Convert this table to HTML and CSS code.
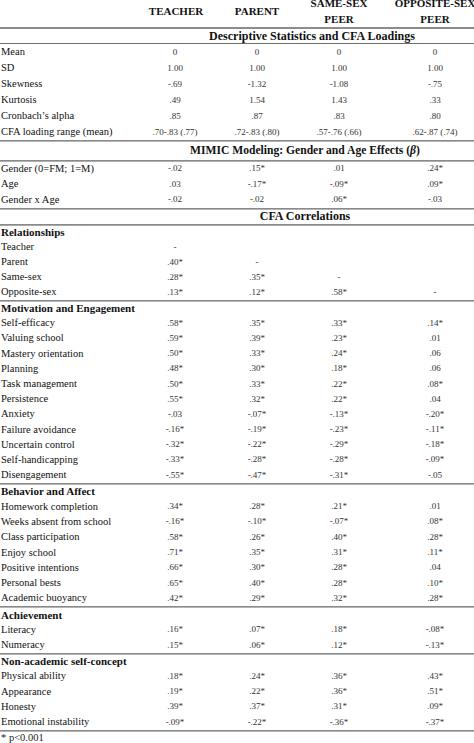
FILE: index.html
```html
<!DOCTYPE html>
<html>
<head>
<meta charset="utf-8">
<link rel="stylesheet" href="styles.css">
</head>
<body>
<div class="sheet">
  <div class="head">
    <div></div>
    <div class="hc single teach">TEACHER</div>
    <div class="hc single">PARENT</div>
    <div class="hc double">SAME-SEX<br>PEER</div>
    <div class="hc double opp">OPPOSITE-SEX<br>PEER</div>
  </div>

  <div class="banner b1"><div></div><div class="bt bt1">Descriptive Statistics and CFA Loadings</div></div>
  <div class="sec desc">
    <div class="row"><div class="lab">Mean</div><div class="v">0</div><div class="v">0</div><div class="v">0</div><div class="v">0</div></div>
    <div class="row"><div class="lab">SD</div><div class="v">1.00</div><div class="v">1.00</div><div class="v">1.00</div><div class="v">1.00</div></div>
    <div class="row"><div class="lab">Skewness</div><div class="v">-.69</div><div class="v">-1.32</div><div class="v">-1.08</div><div class="v">-.75</div></div>
    <div class="row"><div class="lab">Kurtosis</div><div class="v">.49</div><div class="v">1.54</div><div class="v">1.43</div><div class="v">.33</div></div>
    <div class="row"><div class="lab">Cronbach’s alpha</div><div class="v">.85</div><div class="v">.87</div><div class="v">.83</div><div class="v">.80</div></div>
    <div class="row"><div class="lab">CFA loading range (mean)</div><div class="v">.70-.83 (.77)</div><div class="v">.72-.83 (.80)</div><div class="v">.57-.76 (.66)</div><div class="v">.62-.87 (.74)</div></div>
  </div>

  <div class="banner b2"><div></div><div class="bt bt2">MIMIC Modeling: Gender and Age Effects (<i>β</i>)</div></div>
  <div class="sec mimic">
    <div class="row"><div class="lab">Gender (0=FM; 1=M)</div><div class="v">-.02</div><div class="v">.15*</div><div class="v">.01</div><div class="v">.24*</div></div>
    <div class="row"><div class="lab">Age</div><div class="v">.03</div><div class="v">-.17*</div><div class="v">-.09*</div><div class="v">.09*</div></div>
    <div class="row"><div class="lab">Gender x Age</div><div class="v">-.02</div><div class="v">-.02</div><div class="v">.06*</div><div class="v">-.03</div></div>
  </div>

  <div class="banner b3"><div></div><div class="bt bt3">CFA Correlations</div></div>

  <div class="sec rel">
    <div class="row"><div class="lab bold">Relationships</div></div>
    <div class="row"><div class="lab">Teacher</div><div class="v">-</div></div>
    <div class="row"><div class="lab">Parent</div><div class="v">.40*</div><div class="v">-</div></div>
    <div class="row"><div class="lab">Same-sex</div><div class="v">.28*</div><div class="v">.35*</div><div class="v">-</div></div>
    <div class="row"><div class="lab">Opposite-sex</div><div class="v">.13*</div><div class="v">.12*</div><div class="v">.58*</div><div class="v">-</div></div>
  </div>

  <div class="sec mot">
    <div class="row"><div class="lab bold">Motivation and Engagement</div></div>
    <div class="row"><div class="lab">Self-efficacy</div><div class="v">.58*</div><div class="v">.35*</div><div class="v">.33*</div><div class="v">.14*</div></div>
    <div class="row"><div class="lab">Valuing school</div><div class="v">.59*</div><div class="v">.39*</div><div class="v">.23*</div><div class="v">.01</div></div>
    <div class="row"><div class="lab">Mastery orientation</div><div class="v">.50*</div><div class="v">.33*</div><div class="v">.24*</div><div class="v">.06</div></div>
    <div class="row"><div class="lab">Planning</div><div class="v">.48*</div><div class="v">.30*</div><div class="v">.18*</div><div class="v">.06</div></div>
    <div class="row"><div class="lab">Task management</div><div class="v">.50*</div><div class="v">.33*</div><div class="v">.22*</div><div class="v">.08*</div></div>
    <div class="row"><div class="lab">Persistence</div><div class="v">.55*</div><div class="v">.32*</div><div class="v">.22*</div><div class="v">.04</div></div>
    <div class="row"><div class="lab">Anxiety</div><div class="v">-.03</div><div class="v">-.07*</div><div class="v">-.13*</div><div class="v">-.20*</div></div>
    <div class="row"><div class="lab">Failure avoidance</div><div class="v">-.16*</div><div class="v">-.19*</div><div class="v">-.23*</div><div class="v">-.11*</div></div>
    <div class="row"><div class="lab">Uncertain control</div><div class="v">-.32*</div><div class="v">-.22*</div><div class="v">-.29*</div><div class="v">-.18*</div></div>
    <div class="row"><div class="lab">Self-handicapping</div><div class="v">-.33*</div><div class="v">-.28*</div><div class="v">-.28*</div><div class="v">-.09*</div></div>
    <div class="row"><div class="lab">Disengagement</div><div class="v">-.55*</div><div class="v">-.47*</div><div class="v">-.31*</div><div class="v">-.05</div></div>
  </div>

  <div class="sec beh">
    <div class="row"><div class="lab bold">Behavior and Affect</div></div>
    <div class="row"><div class="lab">Homework completion</div><div class="v">.34*</div><div class="v">.28*</div><div class="v">.21*</div><div class="v">.01</div></div>
    <div class="row"><div class="lab">Weeks absent from school</div><div class="v">-.16*</div><div class="v">-.10*</div><div class="v">-.07*</div><div class="v">.08*</div></div>
    <div class="row"><div class="lab">Class participation</div><div class="v">.58*</div><div class="v">.26*</div><div class="v">.40*</div><div class="v">.28*</div></div>
    <div class="row"><div class="lab">Enjoy school</div><div class="v">.71*</div><div class="v">.35*</div><div class="v">.31*</div><div class="v">.11*</div></div>
    <div class="row"><div class="lab">Positive intentions</div><div class="v">.66*</div><div class="v">.30*</div><div class="v">.28*</div><div class="v">.04</div></div>
    <div class="row"><div class="lab">Personal bests</div><div class="v">.65*</div><div class="v">.40*</div><div class="v">.28*</div><div class="v">.10*</div></div>
    <div class="row"><div class="lab">Academic buoyancy</div><div class="v">.42*</div><div class="v">.29*</div><div class="v">.32*</div><div class="v">.28*</div></div>
  </div>

  <div class="sec ach">
    <div class="row"><div class="lab bold">Achievement</div></div>
    <div class="row"><div class="lab">Literacy</div><div class="v">.16*</div><div class="v">.07*</div><div class="v">.18*</div><div class="v">-.08*</div></div>
    <div class="row"><div class="lab">Numeracy</div><div class="v">.15*</div><div class="v">.06*</div><div class="v">.12*</div><div class="v">-.13*</div></div>
  </div>

  <div class="sec non">
    <div class="row"><div class="lab bold">Non-academic self-concept</div></div>
    <div class="row"><div class="lab">Physical ability</div><div class="v">.18*</div><div class="v">.24*</div><div class="v">.36*</div><div class="v">.43*</div></div>
    <div class="row"><div class="lab">Appearance</div><div class="v">.19*</div><div class="v">.22*</div><div class="v">.36*</div><div class="v">.51*</div></div>
    <div class="row"><div class="lab">Honesty</div><div class="v">.39*</div><div class="v">.37*</div><div class="v">.31*</div><div class="v">.09*</div></div>
    <div class="row"><div class="lab">Emotional instability</div><div class="v">-.09*</div><div class="v">-.22*</div><div class="v">-.36*</div><div class="v">-.37*</div></div>
  </div>

  <div class="foot">* p&lt;0.001</div>
</div>
</body>
</html>
```

FILE: styles.css
```css
html, body {
  margin: 0;
  padding: 0;
  background: #ffffff;
}
body {
  width: 474px;
  height: 743px;
  overflow: hidden;
  font-family: "Liberation Serif", "Times New Roman", serif;
  color: #111111;
}
.sheet {
  width: 474px;
  overflow: hidden;
}
.head, .banner, .row {
  display: grid;
  grid-template-columns: 134px 82px 82px 82px 110px;
  width: 490px;
}
.head {
  height: 27px;
  grid-template-rows: 27px;
  align-items: start;
  border-bottom: 2px solid #8c8c8c;
  overflow: hidden;
}
.hc {
  font-weight: bold;
  font-size: 11px;
  line-height: 16px;
  text-align: center;
  white-space: nowrap;
}
.hc.single { padding-top: 3px; }
.hc.double { margin-top: -5px; }
.hc.teach { padding-left: 2px; }
.banner {
  align-items: center;
}
.bt {
  grid-column: 2 / 6;
  text-align: center;
  font-weight: bold;
  font-size: 12px;
  white-space: nowrap;
}
.bt2 { font-size: 11.6px; padding-right: 14px; }
.bt3 { padding-right: 14px; }
.bt i { font-style: italic; }
.b1 {
  height: 14px;
  border-bottom: 1px solid #6e6e6e;
}
.b2 {
  height: 19px;
  border-bottom: 1px solid #8a8a8a;
  box-shadow: 0 1px 0 #b0b0b0;
}
.b3 {
  height: 15px;
  border-bottom: 1px solid #8a8a8a;
  box-shadow: 0 1px 0 #a8a8a8;
}
.sec {
  border-bottom: 1px solid #8a8a8a;
  box-shadow: 0 1px 0 #b4b4b4;
  width: 474px;
}
.row {
  align-items: center;
  height: 15.2px;
}
.desc .row { height: 16px; }
.mimic .row { height: 15.5px; }
.rel .row { height: 15px; }
.beh .row { height: 15.3px; }
.lab {
  grid-column: 1;
  font-size: 10.5px;
  padding-left: 1px;
  white-space: nowrap;
  line-height: 12px;
}
.lab.bold {
  font-weight: bold;
  font-size: 11px;
  grid-column: 1 / 4;
}
.v {
  font-size: 9px;
  text-align: center;
  color: #333333;
  white-space: nowrap;
  line-height: 11px;
}
.foot {
  font-size: 10.5px;
  padding-left: 1px;
  padding-top: 1px;
  line-height: 12px;
  color: #222222;
}
```
